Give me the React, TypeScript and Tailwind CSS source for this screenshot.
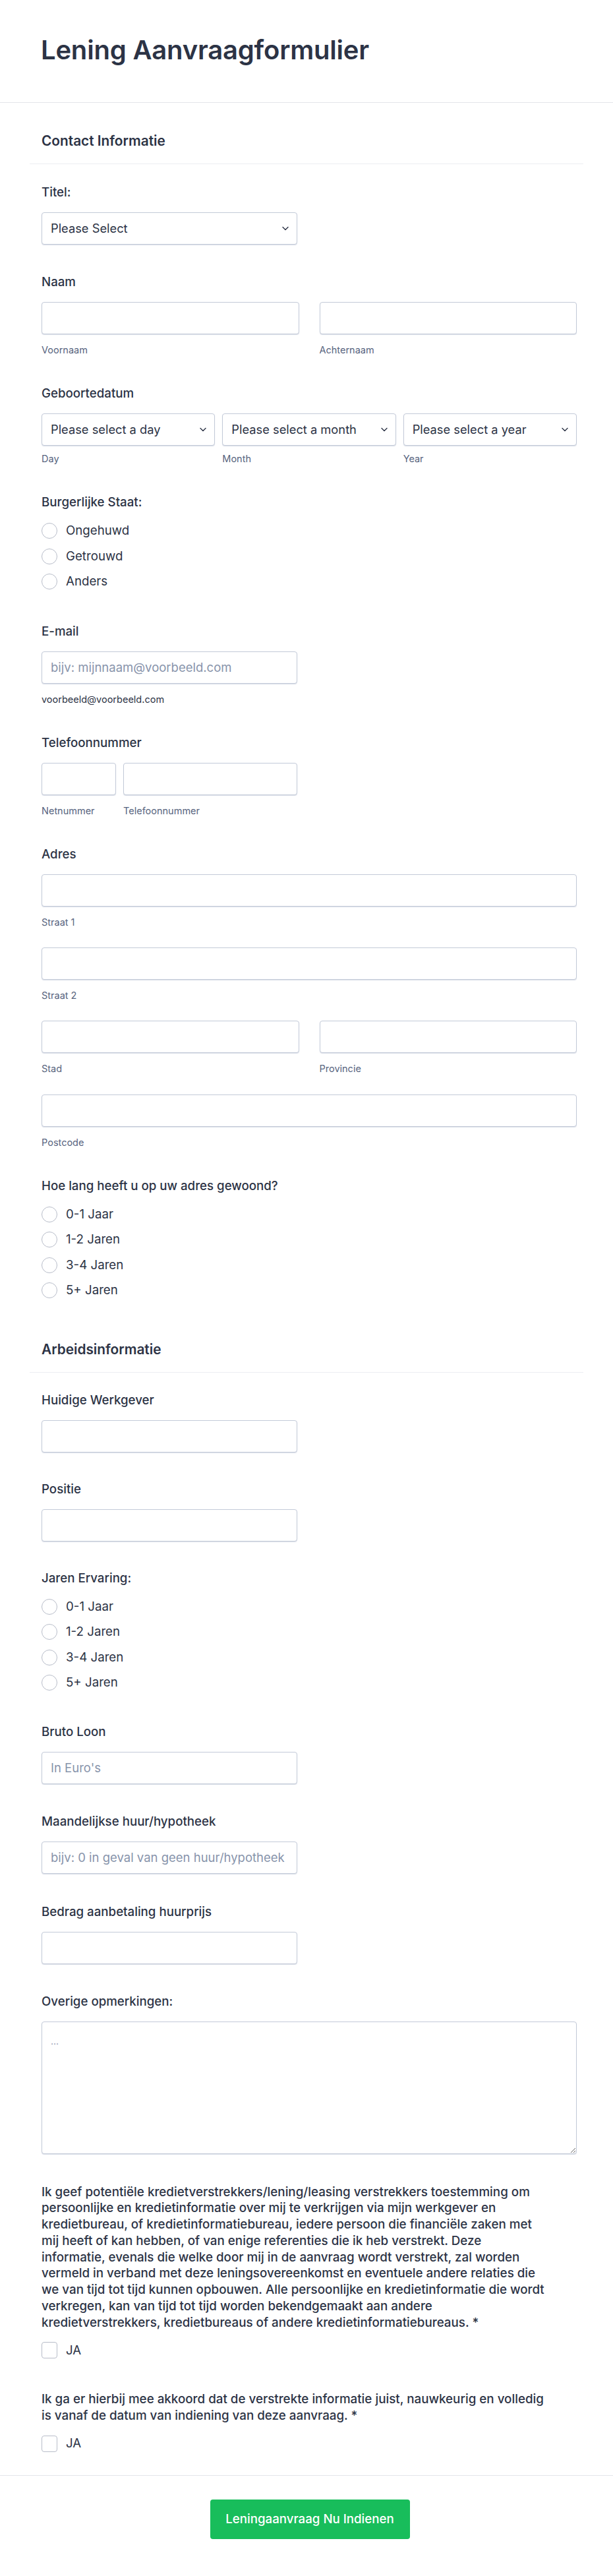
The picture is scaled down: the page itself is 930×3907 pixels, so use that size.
import React from "react";

const inputCls =
  "block h-[49px] w-full rounded-[4px] border border-[#c3cad8] bg-white px-[13px] text-[18.5px] text-[#2c3345] shadow-[0_1px_1px_rgba(195,202,216,0.6)] outline-none placeholder:text-[#8894ab]";

function Label({ children }: { children: React.ReactNode }) {
  return (
    <div className="text-[18.7px] leading-[24px] font-medium text-[#2c3345]">
      {children}
    </div>
  );
}

function Sub({ children, className = "" }: { children: React.ReactNode; className?: string }) {
  return (
    <div className={"text-[14.5px] leading-[20px] text-[#57647e] " + className}>
      {children}
    </div>
  );
}

function FakeSelect({ text }: { text: string }) {
  return (
    <div className="flex h-[49px] w-full items-center justify-between rounded-[4px] border border-[#c3cad8] bg-white pl-[13px] pr-[12px] shadow-[0_1px_1px_rgba(195,202,216,0.6)]">
      <span className="truncate text-[18.3px] text-[#2c3345]">{text}</span>
      <svg width="10" height="7" viewBox="0 0 10 7" fill="none" className="shrink-0">
        <path d="M1 1.5l4 4 4-4" stroke="#2c3345" strokeWidth="1.4" strokeLinecap="round" strokeLinejoin="round" />
      </svg>
    </div>
  );
}

function Radios({ options }: { options: string[] }) {
  return (
    <div className="mt-[12px] flex flex-col">
      {options.map((o) => (
        <label key={o} className="flex h-[38.5px] items-center gap-[13px]">
          <span className="h-[24px] w-[24px] rounded-full border border-[#b8bdc9] bg-white" />
          <span className="text-[18.7px] text-[#2c3345]">{o}</span>
        </label>
      ))}
    </div>
  );
}

function Check() {
  return (
    <label className="flex h-[38.5px] items-center gap-[13px]">
      <span className="h-[25px] w-[24px] rounded-[4px] border border-[#b8bdc9] bg-white" />
      <span className="text-[18.7px] text-[#2c3345]">JA</span>
    </label>
  );
}

function SectionHead({ title, top }: { title: string; top: string }) {
  return (
    <div className={"mx-[45px] border-b border-[#eceef2] px-[18px] pb-[20px] " + top}>
      <h2 className="text-[20.8px] leading-[28px] font-semibold text-[#2c3345]">{title}</h2>
    </div>
  );
}

function Lines({ lines }: { lines: string[] }) {
  return (
    <p className="text-[18.8px] leading-[24.8px] font-medium text-[#2c3345]">
      {lines.map((l, i) => (
        <span key={i} className="block whitespace-nowrap">
          {l}
        </span>
      ))}
    </p>
  );
}

export default function App() {
  const years = ["0-1 Jaar", "1-2 Jaren", "3-4 Jaren", "5+ Jaren"];
  return (
    <div className="bg-white font-['Inter',sans-serif] text-[#2c3345]">
      <header className="border-b border-[#e3e5ea] px-[62px] pt-[52px] pb-[55px]">
        <h1 className="text-[40px] leading-[48px] font-semibold tracking-[-0.2px] text-[#2c3345]">
          Lening Aanvraagformulier
        </h1>
      </header>

      <SectionHead title="Contact Informatie" top="pt-[44px]" />

      <div className="px-[63px] pr-[55px]">
        <div className="mt-[31px] w-[388px]">
          <Label>Titel:</Label>
          <div className="mt-[18px]">
            <FakeSelect text="Please Select" />
          </div>
        </div>

        <div className="mt-[45px]">
          <Label>Naam</Label>
          <div className="mt-[18px] grid grid-cols-2 gap-[31px]">
            <div>
              <input className={inputCls} />
              <Sub className="mt-[14px]">Voornaam</Sub>
            </div>
            <div>
              <input className={inputCls} />
              <Sub className="mt-[14px]">Achternaam</Sub>
            </div>
          </div>
        </div>

        <div className="mt-[44px]">
          <Label>Geboortedatum</Label>
          <div className="mt-[18px] grid grid-cols-3 gap-[11px]">
            {[
              ["Please select a day", "Day"],
              ["Please select a month", "Month"],
              ["Please select a year", "Year"],
            ].map(([t, s]) => (
              <div key={s}>
                <FakeSelect text={t} />
                <Sub className="mt-[10px]">{s}</Sub>
              </div>
            ))}
          </div>
        </div>

        <div className="mt-[44px]">
          <Label>Burgerlijke Staat:</Label>
          <Radios options={["Ongehuwd", "Getrouwd", "Anders"]} />
        </div>

        <div className="mt-[44px] w-[388px]">
          <Label>E-mail</Label>
          <input className={inputCls + " mt-[18px]"} placeholder="bijv: mijnnaam@voorbeeld.com" />
          <div className="mt-[14px] text-[14.5px] leading-[20px] text-[#2c3345]">voorbeeld@voorbeeld.com</div>
        </div>

        <div className="mt-[44px] w-[388px]">
          <Label>Telefoonnummer</Label>
          <div className="mt-[18px] grid grid-cols-[113px_1fr] gap-[11px]">
            <div>
              <input className={inputCls} />
              <Sub className="mt-[14px]">Netnummer</Sub>
            </div>
            <div>
              <input className={inputCls} />
              <Sub className="mt-[14px]">Telefoonnummer</Sub>
            </div>
          </div>
        </div>

        <div className="mt-[44px]">
          <Label>Adres</Label>
          <div className="mt-[18px]">
            <input className={inputCls} />
            <Sub className="mt-[14px]">Straat 1</Sub>
          </div>
          <div className="mt-[28px]">
            <input className={inputCls} />
            <Sub className="mt-[14px]">Straat 2</Sub>
          </div>
          <div className="mt-[28px] grid grid-cols-2 gap-[31px]">
            <div>
              <input className={inputCls} />
              <Sub className="mt-[14px]">Stad</Sub>
            </div>
            <div>
              <input className={inputCls} />
              <Sub className="mt-[14px]">Provincie</Sub>
            </div>
          </div>
          <div className="mt-[29px]">
            <input className={inputCls} />
            <Sub className="mt-[14px]">Postcode</Sub>
          </div>
        </div>

        <div className="mt-[44px]">
          <Label>Hoe lang heeft u op uw adres gewoond?</Label>
          <Radios options={years} />
        </div>
      </div>

      <SectionHead title="Arbeidsinformatie" top="pt-[56px]" />

      <div className="px-[63px] pr-[55px]">
        <div className="mt-[30px] w-[388px]">
          <Label>Huidige Werkgever</Label>
          <input className={inputCls + " mt-[18px]"} />
        </div>

        <div className="mt-[44px] w-[388px]">
          <Label>Positie</Label>
          <input className={inputCls + " mt-[18px]"} />
        </div>

        <div className="mt-[44px]">
          <Label>Jaren Ervaring:</Label>
          <Radios options={years} />
        </div>

        <div className="mt-[43px] w-[388px]">
          <Label>Bruto Loon</Label>
          <input className={inputCls + " mt-[18px]"} placeholder="In Euro's" />
        </div>

        <div className="mt-[45px] w-[388px]">
          <Label>Maandelijkse huur/hypotheek</Label>
          <input
            className={inputCls + " mt-[18px]"}
            placeholder="bijv: 0 in geval van geen huur/hypotheek"
          />
        </div>

        <div className="mt-[46px] w-[388px]">
          <Label>Bedrag aanbetaling huurprijs</Label>
          <input className={inputCls + " mt-[18px]"} />
        </div>

        <div className="mt-[45px]">
          <Label>Overige opmerkingen:</Label>
          <textarea
            className="mt-[18px] block h-[201px] w-full rounded-[4px] border border-[#c3cad8] bg-white px-[13px] pt-[18px] text-[14px] text-[#2c3345] shadow-[0_1px_1px_rgba(195,202,216,0.6)] outline-none placeholder:text-[#8894ab]"
            placeholder="..."
          />
        </div>

        <div className="mt-[46px]">
          <Lines
            lines={[
              "Ik geef potentiële kredietverstrekkers/lening/leasing verstrekkers toestemming om",
              "persoonlijke en kredietinformatie over mij te verkrijgen via mijn werkgever en",
              "kredietbureau, of kredietinformatiebureau, iedere persoon die financiële zaken met",
              "mij heeft of kan hebben, of van enige referenties die ik heb verstrekt. Deze",
              "informatie, evenals die welke door mij in de aanvraag wordt verstrekt, zal worden",
              "vermeld in verband met deze leningsovereenkomst en eventuele andere relaties die",
              "we van tijd tot tijd kunnen opbouwen. Alle persoonlijke en kredietinformatie die wordt",
              "verkregen, kan van tijd tot tijd worden bekendgemaakt aan andere",
              "kredietverstrekkers, kredietbureaus of andere kredietinformatiebureaus. *",
            ]}
          />
          <div className="mt-[10px]">
            <Check />
          </div>
        </div>

        <div className="mt-[43px]">
          <Lines
            lines={[
              "Ik ga er hierbij mee akkoord dat de verstrekte informatie juist, nauwkeurig en volledig",
              "is vanaf de datum van indiening van deze aanvraag. *",
            ]}
          />
          <div className="mt-[10px]">
            <Check />
          </div>
        </div>
      </div>

      <div className="mt-[29px] flex justify-center border-t border-[#e3e5ea] pt-[36px] pb-[49px]">
        <button className="ml-[10px] h-[60px] w-[303px] rounded-[4px] bg-[#18bd5b] text-[18.7px] font-medium text-white">
          Leningaanvraag Nu Indienen
        </button>
      </div>
    </div>
  );
}
